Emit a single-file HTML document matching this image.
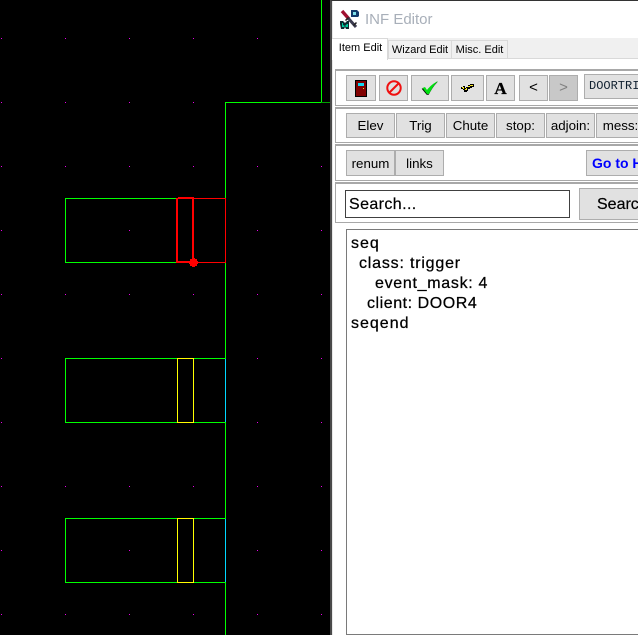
<!DOCTYPE html>
<html>
<head>
<meta charset="utf-8">
<style>
html,body{margin:0;padding:0;background:#000;}
#p{position:relative;width:638px;height:635px;overflow:hidden;background:#000;font-family:"Liberation Sans",sans-serif;color:#000;}
#p svg{position:absolute;}
.a{position:absolute;box-sizing:border-box;}
.b{position:absolute;box-sizing:border-box;background:#e1e1e1;border:1px solid #adadad;text-align:center;white-space:nowrap;font-size:13.33px;overflow:hidden;}
.f{position:absolute;box-sizing:border-box;left:335px;width:320px;border:1px solid #a8a8a8;border-top-width:2px;background:#fff;}
.t{position:absolute;white-space:pre;font-size:16px;line-height:20px;-webkit-text-stroke:.25px #000;}
.tab{position:absolute;box-sizing:border-box;font-size:11px;white-space:nowrap;text-align:center;border:1px solid #d9d9d9;background:#f0f0f0;}
</style>
</head>
<body>
<div id="p">
<svg width="331" height="635" style="left:0;top:0" shape-rendering="crispEdges">
<g fill="#e800e8" id="d">
<rect x="1" y="38" width="1" height="1"/><rect x="65" y="38" width="1" height="1"/><rect x="129" y="38" width="1" height="1"/><rect x="193" y="38" width="1" height="1"/><rect x="257" y="38" width="1" height="1"/>
<rect x="1" y="102" width="1" height="1"/><rect x="65" y="102" width="1" height="1"/><rect x="129" y="102" width="1" height="1"/><rect x="193" y="102" width="1" height="1"/>
<rect x="1" y="166" width="1" height="1"/><rect x="65" y="166" width="1" height="1"/><rect x="129" y="166" width="1" height="1"/><rect x="193" y="166" width="1" height="1"/><rect x="257" y="166" width="1" height="1"/><rect x="321" y="166" width="1" height="1"/>
<rect x="1" y="230" width="1" height="1"/><rect x="129" y="230" width="1" height="1"/><rect x="257" y="230" width="1" height="1"/><rect x="321" y="230" width="1" height="1"/>
<rect x="1" y="294" width="1" height="1"/><rect x="65" y="294" width="1" height="1"/><rect x="129" y="294" width="1" height="1"/><rect x="193" y="294" width="1" height="1"/><rect x="257" y="294" width="1" height="1"/><rect x="321" y="294" width="1" height="1"/>
<rect x="1" y="358" width="1" height="1"/><rect x="257" y="358" width="1" height="1"/><rect x="321" y="358" width="1" height="1"/>
<rect x="1" y="422" width="1" height="1"/><rect x="257" y="422" width="1" height="1"/><rect x="321" y="422" width="1" height="1"/>
<rect x="1" y="486" width="1" height="1"/><rect x="65" y="486" width="1" height="1"/><rect x="129" y="486" width="1" height="1"/><rect x="193" y="486" width="1" height="1"/><rect x="257" y="486" width="1" height="1"/><rect x="321" y="486" width="1" height="1"/>
<rect x="1" y="550" width="1" height="1"/><rect x="129" y="550" width="1" height="1"/><rect x="257" y="550" width="1" height="1"/><rect x="321" y="550" width="1" height="1"/>
<rect x="1" y="614" width="1" height="1"/><rect x="65" y="614" width="1" height="1"/><rect x="129" y="614" width="1" height="1"/><rect x="193" y="614" width="1" height="1"/><rect x="257" y="614" width="1" height="1"/><rect x="321" y="614" width="1" height="1"/>
</g>
<g fill="#00ff00">
<rect x="321" y="0" width="1" height="102"/>
<rect x="225" y="102" width="106" height="1"/>
<rect x="225" y="102" width="1" height="533"/>
<rect x="65" y="198" width="112" height="1"/>
<rect x="65" y="262" width="112" height="1"/>
<rect x="65" y="198" width="1" height="65"/>
<rect x="65" y="358" width="161" height="1"/><rect x="65" y="422" width="161" height="1"/><rect x="65" y="358" width="1" height="65"/>
<rect x="65" y="518" width="161" height="1"/><rect x="65" y="582" width="161" height="1"/><rect x="65" y="518" width="1" height="65"/>
</g>
<rect x="321" y="102" width="10" height="1" fill="#00a000"/>
<rect x="225" y="359" width="1" height="63" fill="#00d8ff"/>
<rect x="225" y="519" width="1" height="63" fill="#00d8ff"/>
<g fill="#ffff00">
<rect x="177" y="358" width="17" height="1"/><rect x="177" y="422" width="17" height="1"/><rect x="177" y="358" width="1" height="65"/><rect x="193" y="358" width="1" height="65"/>
<rect x="177" y="518" width="17" height="1"/><rect x="177" y="582" width="17" height="1"/><rect x="177" y="518" width="1" height="65"/><rect x="193" y="518" width="1" height="65"/>
</g>
<g fill="#ff0000">
<rect x="193" y="198" width="33" height="1"/>
<rect x="193" y="262" width="33" height="1"/>
<rect x="225" y="198" width="1" height="65"/>
<rect x="176" y="198" width="2" height="65"/>
<rect x="192" y="198" width="2" height="65"/>
<rect x="178" y="197" width="16" height="2"/>
<rect x="176" y="261" width="18" height="2"/>
<rect x="190" y="259" width="7" height="7"/>
<rect x="192" y="258" width="3" height="9"/>
<rect x="189" y="261" width="9" height="3"/>
</g>
</svg>

<div class="a" style="left:330px;top:0;width:308px;height:635px;background:#fff;border-left:2px solid #4a4a4a;border-top:1px solid #333;"></div>
<div class="a" style="left:332px;top:1px;width:1px;height:634px;background:#e8e8e8;"></div>

<svg width="24" height="24" style="left:338px;top:8px" viewBox="338 8 24 24">
<path d="M342 11L349 19" stroke="#a01030" stroke-width="3.4"/>
<path d="M348 18L356 27" stroke="#3c3c50" stroke-width="3"/>
<path d="M353.500 25.500l3-3M345.500 20.500l3-3" stroke="#222" stroke-width="1.500"/>
<path d="M351 10h6l2 2v4l-1 1h-7z" fill="#123a6a"/>
<path d="M353 12h3v3h-3z" fill="#7fe0e8"/>
<path d="M340 21h3l2 2 2-2h2v8h-3l-1-2-1 2h-3l-1-5z" fill="#0d2b30"/>
<path d="M342 23h1v2l2 1 2-2h1v3h-2l-1-1-1 1h-2z" fill="#00d0a0"/>
</svg>
<div class="t" style="left:365px;top:10px;font-size:15px;color:#a8afb9;-webkit-text-stroke:0;">INF Editor</div>

<div class="a" style="left:332px;top:38px;width:306px;height:21px;background:#f0f0f0;border-bottom:1px solid #d9d9d9;"></div>
<div class="tab" style="left:388px;top:40px;width:64px;height:19px;line-height:18px;">Wizard Edit</div>
<div class="tab" style="left:451px;top:40px;width:57px;height:19px;line-height:18px;">Misc. Edit</div>
<div class="tab" style="left:332px;top:38px;width:56px;height:22px;line-height:19px;background:#fff;border-bottom:0;border-left:0;padding-left:2px;">Item Edit</div>

<div class="f" style="top:69px;height:37px;"></div>
<div class="f" style="top:107px;height:36px;"></div>
<div class="f" style="top:144px;height:37px;"></div>
<div class="f" style="top:182px;height:41px;"></div>

<div class="b" style="left:346px;top:75px;width:30px;height:26px;"></div>
<div class="b" style="left:379px;top:75px;width:29px;height:26px;"></div>
<div class="b" style="left:411px;top:75px;width:38px;height:26px;"></div>
<div class="b" style="left:451px;top:75px;width:33px;height:26px;"></div>
<div class="b" style="left:486px;top:75px;width:29px;height:26px;font:bold 17px/25px 'Liberation Serif',serif;-webkit-text-stroke:.3px #000;">A</div>
<div class="b" style="left:519px;top:75px;width:29px;height:26px;font-size:15px;line-height:24px;">&lt;</div>
<div class="b" style="left:549px;top:75px;width:29px;height:26px;font-size:15px;line-height:24px;background:#c8c8c8;color:#808080;">&gt;</div>
<div class="b" style="left:584px;top:74px;width:70px;height:25px;font:12px/23px 'Liberation Mono',monospace;text-align:left;padding-left:4px;color:#102030;">DOORTRIG</div>

<svg width="12" height="17" style="left:355px;top:80px" viewBox="0 0 12 17" shape-rendering="crispEdges">
<rect x="0" y="0" width="12" height="17" fill="#000"/>
<rect x="1" y="1" width="10" height="15" fill="#800000"/>
<rect x="3" y="3" width="6" height="3" fill="#10d8f0"/>
<rect x="8" y="8" width="1" height="1" fill="#f0e020"/>
</svg>
<svg width="18" height="18" style="left:385px;top:79px" viewBox="0 0 18 18">
<circle cx="9" cy="9" r="6.700" fill="none" stroke="#f01010" stroke-width="2"/>
<path d="M4 14L14 4" stroke="#f01010" stroke-width="2"/>
</svg>
<svg width="18" height="16" style="left:421px;top:80px" viewBox="0 0 18 16">
<path d="M1 8l3-1 2 3C9 6 13 3 17 1 13 5 10 10 8 14H6z" fill="#000" transform="translate(-.3 .8)"/>
<path d="M1.500 8l2.500-1 2 3C9 6 13 3 17 1 13 5 10 10 8 14H6z" fill="#00e010"/>
</svg>
<svg width="14" height="10" style="left:461px;top:83px" viewBox="0 0 14 10" shape-rendering="crispEdges">
<path d="M0 4h2v-1h2v2h1v-1h2v-2h2v-1h4v3h-2v1h-2v1h-2v2h-1v1h-3v-2h-1v-1h-2z" fill="#000"/>
<path d="M1 4h2v2h2v-1h2v-2h2v-1h3v1h-3v1h-2v1h-1v2h-2v-1h-2v-1h-1z" fill="#f8e820"/>
</svg>

<div class="b" style="left:346px;top:113px;width:49px;height:25px;line-height:24px;">Elev</div>
<div class="b" style="left:396px;top:113px;width:49px;height:25px;line-height:24px;">Trig</div>
<div class="b" style="left:446px;top:113px;width:49px;height:25px;line-height:24px;">Chute</div>
<div class="b" style="left:496px;top:113px;width:49px;height:25px;line-height:24px;">stop:</div>
<div class="b" style="left:546px;top:113px;width:49px;height:25px;line-height:24px;">adjoin:</div>
<div class="b" style="left:596px;top:113px;width:49px;height:25px;line-height:24px;">mess:</div>

<div class="b" style="left:346px;top:150px;width:49px;height:26px;line-height:25px;">renum</div>
<div class="b" style="left:395px;top:150px;width:49px;height:26px;line-height:25px;">links</div>
<div class="b" style="left:586px;top:150px;width:80px;height:26px;line-height:25px;font-size:14px;font-weight:bold;color:#0000ff;text-align:left;padding-left:5px;">Go to H</div>

<div class="a" style="left:345px;top:190px;width:225px;height:28px;border:1px solid #404040;background:#fff;font-size:16px;line-height:27px;padding-left:3px;white-space:nowrap;letter-spacing:.4px;-webkit-text-stroke:.2px #000;">Search...</div>
<div class="b" style="left:579px;top:188px;width:80px;height:32px;font-size:16px;line-height:31px;text-align:left;padding-left:17px;-webkit-text-stroke:.2px #000;">Search</div>

<div class="a" style="left:346px;top:229px;width:300px;height:406px;background:#fff;border:1px solid #7a7a7a;"></div>
<div class="t" style="left:351px;top:234px;letter-spacing:1px;">seq</div>
<div class="t" style="left:359px;top:254px;letter-spacing:.8px;">class: trigger</div>
<div class="t" style="left:375px;top:274px;letter-spacing:.7px;">event_mask: 4</div>
<div class="t" style="left:367px;top:294px;letter-spacing:.55px;">client: DOOR4</div>
<div class="t" style="left:351px;top:314px;letter-spacing:1px;">seqend</div>
</div>
</body>
</html>
